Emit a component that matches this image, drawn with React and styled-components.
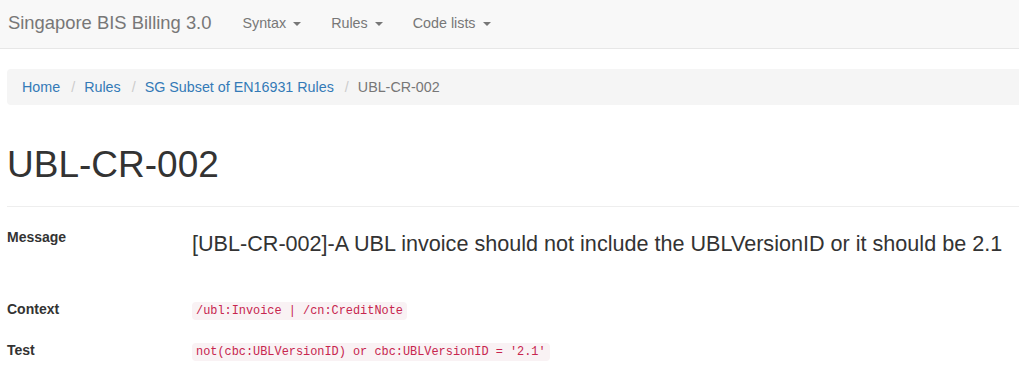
import React from "react";
import styled, { createGlobalStyle } from "styled-components";

const GlobalStyle = createGlobalStyle`
  html, body {
    margin: 0;
    padding: 0;
    background: #fff;
    overflow-x: hidden;
  }
  body {
    font-family: "Liberation Sans", Arial, Helvetica, sans-serif;
    font-size: 14px;
    line-height: 1.42857;
    color: #333;
  }
  * {
    box-sizing: border-box;
  }
`;

const Navbar = styled.nav`
  height: 49px;
  background-color: #f8f8f8;
  border-bottom: 1px solid #e7e7e7;
  margin-bottom: 20px;
`;

const NavInner = styled.div`
  display: flex;
  align-items: stretch;
  height: 100%;
  padding-left: 8px;
`;

const Brand = styled.a`
  display: flex;
  align-items: center;
  font-size: 18.4px;
  line-height: 20px;
  color: #777;
  padding: 0 16px 3px 0;
  text-decoration: none;
`;

const NavList = styled.ul`
  display: flex;
  list-style: none;
  margin: 0;
  padding: 0;
`;

const NavLink = styled.a`
  display: flex;
  align-items: center;
  padding: 0 15px 2px;
  height: 100%;
  font-size: 14.3px;
  color: #777;
  text-decoration: none;
  line-height: 20px;
`;

const Caret = styled.span`
  display: inline-block;
  width: 0;
  height: 0;
  margin-left: 7px;
  margin-top: 2px;
  border-top: 4px solid #777;
  border-left: 4px solid transparent;
  border-right: 4px solid transparent;
`;

const Container = styled.div`
  padding-left: 7px;
  margin-right: -20px;
`;

const Breadcrumb = styled.ol`
  display: flex;
  list-style: none;
  margin: 0 0 40px;
  padding: 8px 15px;
  background-color: #f5f5f5;
  border-radius: 4px;
  line-height: 20px;
  font-size: 14.3px;
`;

const Crumb = styled.li`
  color: ${(p) => (p.$active ? "#777" : "#337ab7")};

  &:not(:first-child)::before {
    content: "/";
    padding: 0 5px;
    color: #ccc;
    margin-right: 4px;
    margin-left: 6px;
  }
`;

const PageHeader = styled.div`
  padding-bottom: 9px;
  margin: 0 0 20px;
  border-bottom: 1px solid #eee;
`;

const Title = styled.h1`
  font-size: 37px;
  font-weight: 500;
  line-height: 1.1;
  margin: 0 0 11px;
  color: #333;
`;

const Details = styled.dl`
  margin: 0;
`;

const Row = styled.div`
  display: grid;
  grid-template-columns: 185px 1fr;
  margin-bottom: ${(p) => p.$gap || "19px"};
`;

const Term = styled.dt`
  font-weight: bold;
  line-height: 20px;
`;

const Desc = styled.dd`
  margin: 0;
  line-height: 20px;
`;

const Lead = styled.p`
  font-size: 21.6px;
  line-height: 1.4;
  margin: 2px 0 0;
  color: #333;
`;

const Code = styled.code`
  font-family: "Liberation Mono", Consolas, "Courier New", monospace;
  font-size: 11.9px;
  padding: 2px 4px;
  color: #c7254e;
  background-color: #f9f2f4;
  border-radius: 4px;
`;

const navItems = ["Syntax", "Rules", "Code lists"];

const App = () => {
  return (
    <>
      <GlobalStyle />
      <Navbar>
        <NavInner>
          <Brand href="#">Singapore BIS Billing 3.0</Brand>
          <NavList>
            {navItems.map((item) => (
              <li key={item}>
                <NavLink href="#">
                  {item}
                  <Caret />
                </NavLink>
              </li>
            ))}
          </NavList>
        </NavInner>
      </Navbar>
      <Container>
        <Breadcrumb>
          <Crumb>Home</Crumb>
          <Crumb>Rules</Crumb>
          <Crumb>SG Subset of EN16931 Rules</Crumb>
          <Crumb $active>UBL-CR-002</Crumb>
        </Breadcrumb>
        <PageHeader>
          <Title>UBL-CR-002</Title>
        </PageHeader>
        <Details>
          <Row $gap="40px">
            <Term>Message</Term>
            <Desc>
              <Lead>
                [UBL-CR-002]-A UBL invoice should not include the UBLVersionID or it should be 2.1
              </Lead>
            </Desc>
          </Row>
          <Row>
            <Term>Context</Term>
            <Desc>
              <Code>/ubl:Invoice | /cn:CreditNote</Code>
            </Desc>
          </Row>
          <Row>
            <Term>Test</Term>
            <Desc>
              <Code>not(cbc:UBLVersionID) or cbc:UBLVersionID = '2.1'</Code>
            </Desc>
          </Row>
        </Details>
      </Container>
    </>
  );
};

export default App;
